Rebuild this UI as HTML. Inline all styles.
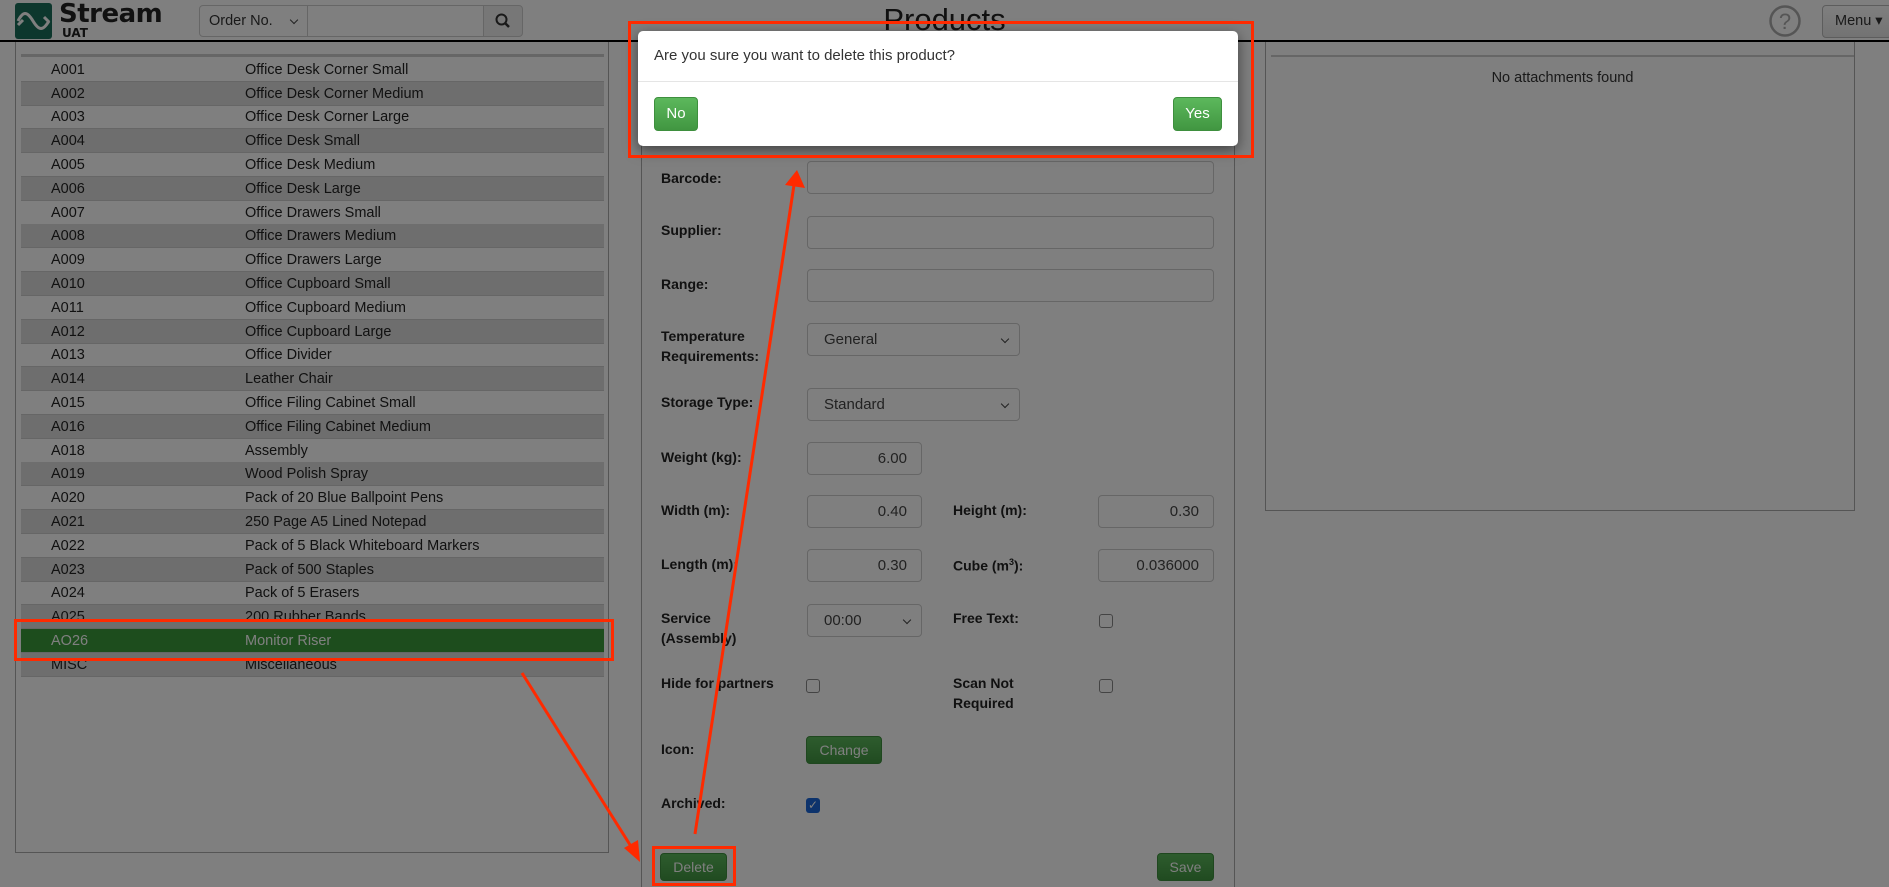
<!DOCTYPE html>
<html style="overflow:hidden;width:1889px;height:887px"><head><meta charset="utf-8"><style>
*{box-sizing:border-box;margin:0;padding:0}
body{width:1889px;height:887px;overflow:hidden;background:#fff;font-family:"Liberation Sans",Arial,sans-serif;color:#333;position:relative}
.a{position:absolute}
.hdr{left:0;top:0;width:1889px;height:42px;border-bottom:2px solid #000;background:#fff}
.row{position:absolute;left:21px;width:583px;height:24px;font-size:14.5px;line-height:24px;border-bottom:1px solid #ccc;color:#222}
.row span{position:absolute}
.row .c1{left:30px}.row .c2{left:224px}
.g{background:#ddd}
.lbl{position:absolute;left:661px;font-size:14px;font-weight:bold;color:#222;line-height:20px}
.lbl2{position:absolute;left:953px;font-size:14px;font-weight:bold;color:#222;line-height:20px}
.inp{position:absolute;border:1px solid #ccc;border-radius:4px;background:#fff;font-size:15px;color:#444;line-height:31px;padding:0 14px 0 16px;height:33px}
.r{text-align:right}
.sel:after{content:"";position:absolute;right:11px;top:12px;width:5px;height:5px;border-right:1.5px solid #444;border-bottom:1.5px solid #444;transform:rotate(45deg)}
.cb{position:absolute;width:14px;height:14px;border:1px solid #888;border-radius:3px;background:#fff}
.btn{position:absolute;background:linear-gradient(#5cb85c,#419641);border:1px solid #3e8f3e;border-radius:4px;color:#fff;font-size:14px;text-align:center}
.red{position:absolute;border:3px solid #ff2a00}
</style></head><body>
<div class="a hdr"></div>
<svg class="a" style="left:15px;top:3px" width="37" height="36" viewBox="0 0 37 36"><rect width="37" height="36" rx="3" fill="#1b6e5a"/><path d="M3 18 C8 8,12 8,18 18 S28 28,34 18" stroke="#fff" stroke-width="3" fill="none"/><path d="M3 22 L8 17 M29 14 L34 19" stroke="#fff" stroke-width="3"/></svg>
<div class="a" style="left:59px;top:-1px;font-size:26px;font-weight:bold;color:#222;font-family:'DejaVu Sans',sans-serif;letter-spacing:-0.5px">Stream</div>
<div class="a" style="left:62px;top:26px;font-size:12px;font-weight:bold;color:#222;font-family:'DejaVu Sans',sans-serif">UAT</div>
<div class="a" style="left:199px;top:5px;width:109px;height:32px;border:1px solid #ccc;border-radius:4px 0 0 4px;font-size:14.5px;line-height:30px;padding-left:9px">Order No.</div>
<div class="a sel" style="left:290px;top:5px;width:18px;height:32px"></div>
<div class="a" style="left:307px;top:5px;width:177px;height:32px;border:1px solid #ccc"></div>
<div class="a" style="left:483px;top:5px;width:40px;height:32px;border:1px solid #ccc;border-radius:0 4px 4px 0;background:#eee"></div>
<svg class="a" style="left:495px;top:13px" width="16" height="16"><circle cx="6.5" cy="6.5" r="5" stroke="#333" stroke-width="2" fill="none"/><path d="M10 10 L14 14" stroke="#333" stroke-width="2.5"/></svg>
<div class="a" style="left:0;width:1889px;top:2px;text-align:center;font-size:31px;color:#222">Products</div>
<svg class="a" style="left:1768px;top:4px" width="34" height="34"><circle cx="17" cy="17" r="14.5" stroke="#aaa" stroke-width="2.5" fill="none"/><text x="17" y="25" text-anchor="middle" font-size="22" fill="#aaa" font-family="Liberation Sans">?</text></svg>
<div class="a" style="left:1822px;top:5px;width:70px;height:33px;border:1px solid #bbb;border-radius:4px;background:linear-gradient(#fff,#e6e6e6);font-size:14.5px;line-height:31px;padding-left:12px">Menu ▾</div>

<div class="a" style="left:15px;top:42px;width:594px;height:811px;border:1px solid #aaa;border-top:none"></div>
<div class="a" style="left:21px;top:54px;width:583px;height:3px;background:#ccc"></div>
<div class="row" style="top:58px"><span class="c1">A001</span><span class="c2">Office Desk Corner Small</span></div>
<div class="row g" style="top:82px"><span class="c1">A002</span><span class="c2">Office Desk Corner Medium</span></div>
<div class="row" style="top:105px"><span class="c1">A003</span><span class="c2">Office Desk Corner Large</span></div>
<div class="row g" style="top:129px"><span class="c1">A004</span><span class="c2">Office Desk Small</span></div>
<div class="row" style="top:153px"><span class="c1">A005</span><span class="c2">Office Desk Medium</span></div>
<div class="row g" style="top:177px"><span class="c1">A006</span><span class="c2">Office Desk Large</span></div>
<div class="row" style="top:201px"><span class="c1">A007</span><span class="c2">Office Drawers Small</span></div>
<div class="row g" style="top:224px"><span class="c1">A008</span><span class="c2">Office Drawers Medium</span></div>
<div class="row" style="top:248px"><span class="c1">A009</span><span class="c2">Office Drawers Large</span></div>
<div class="row g" style="top:272px"><span class="c1">A010</span><span class="c2">Office Cupboard Small</span></div>
<div class="row" style="top:296px"><span class="c1">A011</span><span class="c2">Office Cupboard Medium</span></div>
<div class="row g" style="top:320px"><span class="c1">A012</span><span class="c2">Office Cupboard Large</span></div>
<div class="row" style="top:343px"><span class="c1">A013</span><span class="c2">Office Divider</span></div>
<div class="row g" style="top:367px"><span class="c1">A014</span><span class="c2">Leather Chair</span></div>
<div class="row" style="top:391px"><span class="c1">A015</span><span class="c2">Office Filing Cabinet Small</span></div>
<div class="row g" style="top:415px"><span class="c1">A016</span><span class="c2">Office Filing Cabinet Medium</span></div>
<div class="row" style="top:439px"><span class="c1">A018</span><span class="c2">Assembly</span></div>
<div class="row g" style="top:462px"><span class="c1">A019</span><span class="c2">Wood Polish Spray</span></div>
<div class="row" style="top:486px"><span class="c1">A020</span><span class="c2">Pack of 20 Blue Ballpoint Pens</span></div>
<div class="row g" style="top:510px"><span class="c1">A021</span><span class="c2">250 Page A5 Lined Notepad</span></div>
<div class="row" style="top:534px"><span class="c1">A022</span><span class="c2">Pack of 5 Black Whiteboard Markers</span></div>
<div class="row g" style="top:558px"><span class="c1">A023</span><span class="c2">Pack of 500 Staples</span></div>
<div class="row" style="top:581px"><span class="c1">A024</span><span class="c2">Pack of 5 Erasers</span></div>
<div class="row g" style="top:605px"><span class="c1">A025</span><span class="c2">200 Rubber Bands</span></div>
<div class="row" style="top:629px;background:#3a9a3a;color:#fff"><span class="c1">AO26</span><span class="c2">Monitor Riser</span></div>
<div class="row g" style="top:653px"><span class="c1">MISC</span><span class="c2">Miscellaneous</span></div>

<div class="a" style="left:641px;top:42px;width:594px;height:845px;border:1px solid #aaa;border-top:none;border-bottom:none"></div>
<div class="lbl" style="top:168px">Barcode:</div><div class="inp" style="left:807px;top:161px;width:407px"></div>
<div class="lbl" style="top:220px">Supplier:</div><div class="inp" style="left:807px;top:216px;width:407px"></div>
<div class="lbl" style="top:274px">Range:</div><div class="inp" style="left:807px;top:269px;width:407px"></div>
<div class="lbl" style="top:326px">Temperature<br>Requirements:</div><div class="inp sel" style="left:807px;top:323px;width:213px">General</div>
<div class="lbl" style="top:392px">Storage Type:</div><div class="inp sel" style="left:807px;top:388px;width:213px">Standard</div>
<div class="lbl" style="top:447px">Weight (kg):</div><div class="inp r" style="left:807px;top:442px;width:115px">6.00</div>
<div class="lbl" style="top:500px">Width (m):</div><div class="inp r" style="left:807px;top:495px;width:115px">0.40</div>
<div class="lbl2" style="top:500px">Height (m):</div><div class="inp r" style="left:1098px;top:495px;width:116px">0.30</div>
<div class="lbl" style="top:554px">Length (m):</div><div class="inp r" style="left:807px;top:549px;width:115px">0.30</div>
<div class="lbl2" style="top:552px">Cube (m<sup style="font-size:9px">3</sup>):</div><div class="inp r" style="left:1098px;top:549px;width:116px">0.036000</div>
<div class="lbl" style="top:608px">Service<br>(Assembly)</div><div class="inp sel" style="left:807px;top:604px;width:115px">00:00</div>
<div class="lbl2" style="top:608px">Free Text:</div><div class="cb" style="left:1099px;top:614px"></div>
<div class="lbl" style="top:673px">Hide for partners</div><div class="cb" style="left:806px;top:679px"></div>
<div class="lbl2" style="top:673px">Scan Not<br>Required</div><div class="cb" style="left:1099px;top:679px"></div>
<div class="lbl" style="top:739px">Icon:</div><div class="btn" style="left:806px;top:736px;width:76px;height:28px;line-height:26px">Change</div>
<div class="lbl" style="top:793px">Archived:</div><div class="a" style="left:806px;top:798px;width:14px;height:15px;background:#1a66d9;border-radius:3px;color:#fff;font-size:12px;text-align:center;line-height:15px">✓</div>
<div class="btn" style="left:660px;top:853px;width:67px;height:28px;line-height:26px">Delete</div>
<div class="btn" style="left:1157px;top:853px;width:57px;height:28px;line-height:26px">Save</div>

<div class="a" style="left:1265px;top:42px;width:590px;height:469px;border:1px solid #aaa;border-top:none"></div>
<div class="a" style="left:1271px;top:55px;width:583px;height:2px;background:#ccc"></div>
<div class="a" style="left:1271px;width:583px;top:70px;text-align:center;font-size:14.5px">No attachments found</div>

<div class="a" style="left:0;top:0;width:1889px;height:887px;background:rgba(0,0,0,0.5)"></div>

<div class="a" style="left:638px;top:31px;width:600px;height:115px;background:#fff;border-radius:5px;box-shadow:0 4px 14px rgba(0,0,0,.5)">
<div class="a" style="left:16px;top:16px;font-size:15px;color:#333">Are you sure you want to delete this product?</div>
<div class="a" style="left:0;top:50px;width:600px;height:1px;background:#e5e5e5"></div>
<div class="btn" style="left:16px;top:66px;width:44px;height:34px;line-height:32px;font-size:15px">No</div>
<div class="btn" style="left:535px;top:66px;width:49px;height:34px;line-height:32px;font-size:15px">Yes</div>
</div>

<div class="red" style="left:628px;top:21px;width:626px;height:137px"></div>
<div class="red" style="left:14px;top:619px;width:600px;height:42px"></div>
<div class="red" style="left:652px;top:846px;width:84px;height:40px"></div>
<svg class="a" style="left:0;top:0" width="1889" height="887">
<line x1="522" y1="673" x2="632" y2="848" stroke="#ff2a00" stroke-width="3"/>
<polygon points="640,862 624,848 638,840" fill="#ff2a00"/>
<line x1="695" y1="834" x2="794" y2="185" stroke="#ff2a00" stroke-width="3"/>
<polygon points="797,170 805,188 785,185" fill="#ff2a00"/>
</svg>
</body></html>
